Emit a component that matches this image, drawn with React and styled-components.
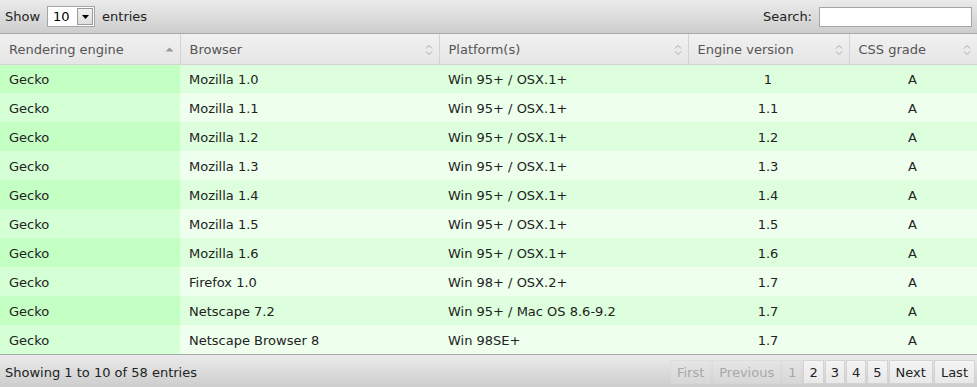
import React from 'react';
import styled, { createGlobalStyle } from 'styled-components';

const GlobalStyle = createGlobalStyle`
  html, body {
    margin: 0;
    padding: 0;
    background: #ffffff;
  }
  body {
    font-family: "DejaVu Sans", Verdana, sans-serif;
    font-size: 13px;
    color: #222222;
  }
`;

const Wrapper = styled.div`
  width: 977px;
  height: 387px;
  overflow: hidden;
  display: flex;
  flex-direction: column;
`;

const Toolbar = styled.div`
  height: ${(p) => p.$h}px;
  flex: none;
  box-sizing: border-box;
  display: flex;
  align-items: center;
  justify-content: space-between;
  padding: ${(p) => (p.$bottom ? '2px 2px 0 5px' : '0 5px')};
  background: linear-gradient(#ebebeb, #cdcdcd);
  border-top: ${(p) => (p.$bottom ? '1px solid #aaaaaa' : 'none')};
  border-bottom: ${(p) => (p.$bottom ? 'none' : '1px solid #aaaaaa')};
  color: #222222;
`;

const LengthLabel = styled.label`
  display: flex;
  align-items: center;
  gap: 7px;
`;

const SelectBox = styled.div`
  display: flex;
  align-items: stretch;
  width: 48px;
  height: 21px;
  box-sizing: border-box;
  border: 1px solid #a5a5a5;
  background: #ffffff;
`;

const Select = styled.select`
  appearance: none;
  border: none;
  outline: none;
  background: transparent;
  flex: 1;
  min-width: 0;
  padding: 0 0 0 5px;
  font: inherit;
  color: #000;
`;

const ArrowButton = styled.span`
  width: 16px;
  margin: 1px;
  display: flex;
  align-items: center;
  justify-content: center;
  background: linear-gradient(#f2f2f2, #dedede);
  border: 1px solid #9a9a9a;
  box-sizing: border-box;
`;

const SearchLabel = styled.label`
  display: flex;
  align-items: center;
  gap: 7px;
`;

const SearchInput = styled.input`
  width: 153px;
  height: 20px;
  box-sizing: border-box;
  border: 1px solid #a5a5a5;
  background: #ffffff;
  padding: 0 3px;
  font: inherit;
`;

const Table = styled.table`
  width: 977px;
  border-collapse: collapse;
  table-layout: fixed;
`;

const HeadCell = styled.th`
  height: 30px;
  padding: 2px 6px 0 9px;
  box-sizing: border-box;
  text-align: left;
  font-weight: normal;
  color: #555555;
  background: linear-gradient(#f0f0f0, #e6e6e6);
  border-right: 1px solid #d3d3d3;
  border-bottom: 1px solid #d3d3d3;
  &:last-child {
    border-right: none;
  }
`;

const HeadInner = styled.div`
  display: flex;
  align-items: center;
  justify-content: space-between;
`;

const Row = styled.tr`
  background: ${(p) => (p.$odd ? '#ddffdd' : '#eeffee')};
`;

const Cell = styled.td`
  height: 29px;
  padding: 2px 10px 0 9px;
  box-sizing: border-box;
  text-align: ${(p) => (p.$center ? 'center' : 'left')};
  white-space: nowrap;
  color: #222222;
  background: ${(p) => (p.$sorted ? (p.$odd ? '#c4ffc4' : '#d5ffd5') : 'transparent')};
`;

const Info = styled.div`
  color: #222222;
`;

const Paging = styled.div`
  display: flex;
  align-items: center;
  height: 24px;
`;

const PageButton = styled.span`
  height: 24px;
  box-sizing: border-box;
  display: flex;
  align-items: center;
  padding: 0 ${(p) => (p.$num ? 5 : 6)}px;
  margin-left: 1px;
  border: 1px solid ${(p) => (p.$disabled ? 'rgba(211,211,211,0.4)' : '#d3d3d3')};
  background: ${(p) => (p.$disabled ? 'rgba(230,230,230,0.35)' : 'linear-gradient(#f4f4f4, #e8e8e8)')};
  color: ${(p) => (p.$disabled ? '#a8a8a8' : '#222222')};
  cursor: ${(p) => (p.$disabled ? 'default' : 'pointer')};
`;

const SortUp = () => (
  <svg width="9" height="5" viewBox="0 0 9 5">
    <path d="M0.5 4.5 L4.5 0.5 L8.5 4.5 Z" fill="#999999" />
  </svg>
);

const SortBoth = () => (
  <svg width="8" height="12" viewBox="0 0 8 12">
    <path d="M1 4.5 L4 1.5 L7 4.5" fill="none" stroke="#aaaaaa" strokeWidth="1" />
    <path d="M1 7.5 L4 10.5 L7 7.5" fill="none" stroke="#aaaaaa" strokeWidth="1" />
  </svg>
);

const columns = [
  { title: 'Rendering engine', width: 180, sorted: true },
  { title: 'Browser', width: 259 },
  { title: 'Platform(s)', width: 249 },
  { title: 'Engine version', width: 161, center: true },
  { title: 'CSS grade', width: 128, center: true },
];

const rows = [
  ['Gecko', 'Mozilla 1.0', 'Win 95+ / OSX.1+', '1', 'A'],
  ['Gecko', 'Mozilla 1.1', 'Win 95+ / OSX.1+', '1.1', 'A'],
  ['Gecko', 'Mozilla 1.2', 'Win 95+ / OSX.1+', '1.2', 'A'],
  ['Gecko', 'Mozilla 1.3', 'Win 95+ / OSX.1+', '1.3', 'A'],
  ['Gecko', 'Mozilla 1.4', 'Win 95+ / OSX.1+', '1.4', 'A'],
  ['Gecko', 'Mozilla 1.5', 'Win 95+ / OSX.1+', '1.5', 'A'],
  ['Gecko', 'Mozilla 1.6', 'Win 95+ / OSX.1+', '1.6', 'A'],
  ['Gecko', 'Firefox 1.0', 'Win 98+ / OSX.2+', '1.7', 'A'],
  ['Gecko', 'Netscape 7.2', 'Win 95+ / Mac OS 8.6-9.2', '1.7', 'A'],
  ['Gecko', 'Netscape Browser 8', 'Win 98SE+', '1.7', 'A'],
];

const pages = [
  { label: 'First', disabled: true },
  { label: 'Previous', disabled: true },
  { label: '1', disabled: true, num: true },
  { label: '2', num: true },
  { label: '3', num: true },
  { label: '4', num: true },
  { label: '5', num: true },
  { label: 'Next' },
  { label: 'Last' },
];

export default function App() {
  return (
    <Wrapper>
      <GlobalStyle />
      <Toolbar $h={34}>
        <LengthLabel>
          Show
          <SelectBox>
            <Select defaultValue="10">
              <option value="10">10</option>
              <option value="25">25</option>
              <option value="50">50</option>
              <option value="100">100</option>
            </Select>
            <ArrowButton>
              <svg width="7" height="4" viewBox="0 0 7 4">
                <path d="M0 0 L7 0 L3.5 4 Z" fill="#000000" />
              </svg>
            </ArrowButton>
          </SelectBox>
          entries
        </LengthLabel>
        <SearchLabel>
          Search:
          <SearchInput type="text" />
        </SearchLabel>
      </Toolbar>
      <Table>
        <colgroup>
          {columns.map((c) => (
            <col key={c.title} style={{ width: c.width }} />
          ))}
        </colgroup>
        <thead>
          <tr>
            {columns.map((c) => (
              <HeadCell key={c.title}>
                <HeadInner>
                  <span>{c.title}</span>
                  {c.sorted ? <SortUp /> : <SortBoth />}
                </HeadInner>
              </HeadCell>
            ))}
          </tr>
        </thead>
        <tbody>
          {rows.map((r, i) => (
            <Row key={i} $odd={i % 2 === 0}>
              {r.map((v, j) => (
                <Cell
                  key={j}
                  $odd={i % 2 === 0}
                  $sorted={columns[j].sorted}
                  $center={columns[j].center}
                >
                  {v}
                </Cell>
              ))}
            </Row>
          ))}
        </tbody>
      </Table>
      <Toolbar $h={33} $bottom>
        <Info>Showing 1 to 10 of 58 entries</Info>
        <Paging>
          {pages.map((p) => (
            <PageButton key={p.label} $disabled={p.disabled} $num={p.num}>
              {p.label}
            </PageButton>
          ))}
        </Paging>
      </Toolbar>
    </Wrapper>
  );
}
